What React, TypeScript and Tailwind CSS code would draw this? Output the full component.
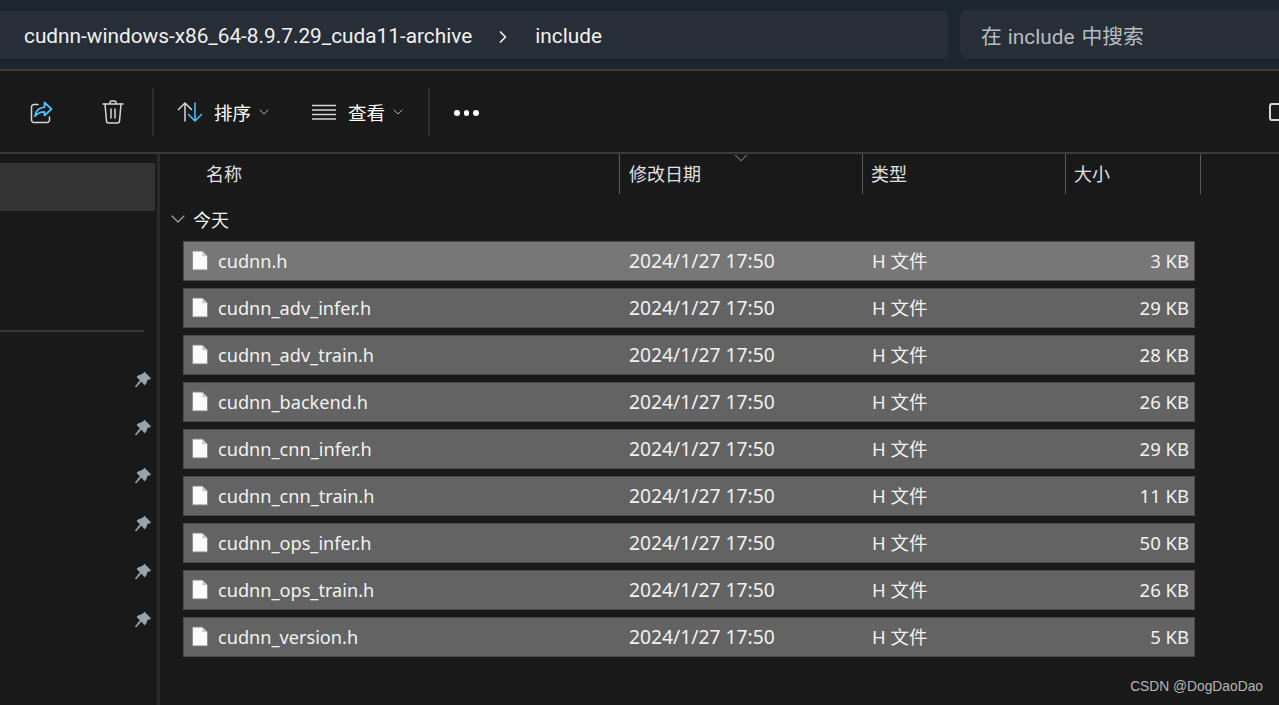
import { ChevronDown, ChevronRight } from 'lucide-react';

const files = [
  { name: 'cudnn.h', size: '3 KB' },
  { name: 'cudnn_adv_infer.h', size: '29 KB' },
  { name: 'cudnn_adv_train.h', size: '28 KB' },
  { name: 'cudnn_backend.h', size: '26 KB' },
  { name: 'cudnn_cnn_infer.h', size: '29 KB' },
  { name: 'cudnn_cnn_train.h', size: '11 KB' },
  { name: 'cudnn_ops_infer.h', size: '50 KB' },
  { name: 'cudnn_ops_train.h', size: '26 KB' },
  { name: 'cudnn_version.h', size: '5 KB' },
];

const font = "font-['Noto_Sans','Noto_Sans_CJK_SC',sans-serif]";

function ShareIcon() {
  return (
    <svg width="26" height="26" viewBox="0 0 26 26" fill="none">
      <path d="M10 5.5H6a2.5 2.5 0 0 0-2.5 2.5v13A2.5 2.5 0 0 0 6 23.5h13a2.5 2.5 0 0 0 2.5-2.5v-3" stroke="#d6d6d6" strokeWidth="1.5" strokeLinecap="round" />
      <path d="M16.5 3.5 23.5 10l-7 6.5v-3.6c-4 0-7 1.2-9.5 4.3.6-5.2 3.8-8.6 9.5-9.1V3.5Z" stroke="#4cc2ff" strokeWidth="1.8" strokeLinejoin="round" />
    </svg>
  );
}

function TrashIcon() {
  return (
    <svg width="24" height="26" viewBox="0 0 24 26" fill="none" stroke="#d6d6d6" strokeWidth="1.5" strokeLinecap="round" strokeLinejoin="round">
      <path d="M2 5h20M9 5V3.5A1.5 1.5 0 0 1 10.5 2h3A1.5 1.5 0 0 1 15 3.5V5" />
      <path d="M4 5l1.5 17a2 2 0 0 0 2 2h9a2 2 0 0 0 2-2L20 5" />
      <path d="M10 10v9M14 10v9" />
    </svg>
  );
}

function SortIcon() {
  return (
    <svg width="26" height="24" viewBox="0 0 26 24" fill="none" strokeWidth="1.5" strokeLinecap="round" strokeLinejoin="round">
      <path d="M8 21V3M1.5 9.5 8 3l6.5 6.5" stroke="#d6d6d6" />
      <path d="M18 3v18M11.5 14.5 18 21l6.5-6.5" stroke="#4cc2ff" />
    </svg>
  );
}

function ViewIcon() {
  return (
    <svg width="24" height="16" viewBox="0 0 24 16" fill="none" stroke="#d6d6d6" strokeWidth="1.4">
      <path d="M0 1.5h24M0 6h24M0 10.5h24M0 15h24" />
    </svg>
  );
}

function PinIcon() {
  return (
    <svg width="18" height="18" viewBox="0 0 18 18" fill="#97a3ab">
      <path d="M10.5.8 17 7.2l-1.6 1.6-1.6-.2-1.7 4.2-1.4 1.4-3.4-3.4L2 16.6l-1-1 4.8-6.3-3.3-3.3L4 4.6l4.2-1.5L8.9 2.4Z" />
    </svg>
  );
}

function FileIcon() {
  return (
    <svg width="16" height="21" viewBox="0 0 17 21">
      <path d="M.5.5h10.5l5.5 5.5v14.5H.5Z" fill="#fbfbfb" stroke="#8a8a8a" strokeWidth="1" />
      <path d="M11 .5v5.5h5.5Z" fill="#c8c8c8" />
    </svg>
  );
}

function ColumnHead({ label, className }: { label: string; className: string }) {
  return (
    <div className={`h-[40px] flex items-center border-r border-[#5a5a5a] text-[18px] text-[#e0e0e0] ${className}`}>
      {label}
    </div>
  );
}

export default function App() {
  return (
    <div className={`w-[1279px] h-[705px] overflow-hidden flex flex-col bg-[#191919] text-white ${font}`}>
      {/* address bar */}
      <div className="h-[71px] shrink-0 bg-[#1c2630] border-b-2 border-[#3a3a3a] flex gap-[12px] pt-[11px]">
        <div className="w-[948px] h-[48px] bg-[#272e37] rounded-r-md flex items-center pl-6 pt-[3px] text-[20.8px] text-[#f2f2f2] font-['Roboto','Noto_Sans_CJK_SC',sans-serif]">
          <span>cudnn-windows-x86_64-8.9.7.29_cuda11-archive</span>
          <ChevronRight className="ml-[21px] mr-[22px] w-[20px] h-[20px]" strokeWidth={2} />
          <span>include</span>
        </div>
        <div className="flex-1 h-[49px] -mt-px pt-[6px] bg-[#272e37] rounded-l-lg flex items-center pl-[21px] text-[20.8px] text-[#b8bcc0] font-['Roboto','Noto_Sans_CJK_SC',sans-serif]">
          <span>在</span>
          <span className="ml-[6px] mr-[7px]">include</span>
          <span>中搜索</span>
        </div>
      </div>

      {/* toolbar */}
      <div className="h-[83px] shrink-0 border-b-2 border-[#3a3a3a] flex items-center pt-[1px] relative">
        <div className="w-[154px] flex items-center pl-[28px] gap-[47px] h-[48px] border-r-2 border-[#2e2e2e]">
          <ShareIcon />
          <TrashIcon />
        </div>
        <div className="flex items-center h-[48px] w-[276px] border-r-2 border-[#2e2e2e] pl-[23px] text-[18.5px]">
          <SortIcon />
          <span className="ml-[11px] pt-[1px]">排序</span>
          <ChevronDown className="ml-[5px] w-[16px] h-[16px] text-[#b0b0b0]" strokeWidth={1.5} />
          <div className="w-[40px]" />
          <ViewIcon />
          <span className="ml-[12px] pt-[1px]">查看</span>
          <ChevronDown className="ml-[5px] w-[16px] h-[16px] text-[#b0b0b0]" strokeWidth={1.5} />
        </div>
        <div className="ml-[24px] mt-[2px] flex gap-[4px]">
          <div className="w-[5.5px] h-[5.5px] rounded-full bg-white" />
          <div className="w-[5.5px] h-[5.5px] rounded-full bg-white" />
          <div className="w-[5.5px] h-[5.5px] rounded-full bg-white" />
        </div>
        <div className="ml-auto w-[10px] h-[18px] rounded-l-[3px] border-2 border-r-0 border-[#d6d6d6]" />
      </div>

      <div className="flex-1 flex min-h-0">
        {/* nav pane */}
        <div className="w-[160px] shrink-0 pt-[9px] border-r-[3px] border-[#2a2a2a]">
          <div className="w-[155px] h-[48px] bg-[#333333] rounded-r-[2px]" />
          <div className="mt-[119px] w-[144px] h-[2px] bg-[#383838]" />
          <div className="mt-[39px] flex flex-col items-end gap-[30px] pr-[1px] w-[153px]">
            {[0, 1, 2, 3, 4, 5].map((i) => (
              <PinIcon key={i} />
            ))}
          </div>
        </div>

        {/* file list */}
        <div className="flex-1 relative text-[#f2f2f2]">
          <div className="grid grid-cols-[460px_243px_203px_135px] relative">
            <ColumnHead label="名称" className="pl-[46px]" />
            <ColumnHead label="修改日期" className="pl-[9px]" />
            <ColumnHead label="类型" className="pl-[8px]" />
            <ColumnHead label="大小" className="pl-[8px]" />
            <ChevronDown className="absolute left-[570px] -top-[7px] w-[22px] h-[22px] text-[#a0a0a0]" strokeWidth={1} />
          </div>
          <div className="flex items-center h-[47px] pt-[5px] pl-[6px] text-[18px]">
            <ChevronDown className="w-[24px] h-[24px] mb-[3px] text-[#a0a0a0]" strokeWidth={1.2} />
            <span className="ml-[3px]">今天</span>
          </div>
          <div className="flex flex-col gap-[7px] ml-[23px] w-[1012px]">
            {files.map((f, i) => (
              <div
                key={f.name}
                className={`h-[40px] grid grid-cols-[445px_243px_1fr_auto] items-center border border-[#4a4a4a] text-[18.5px] pr-[5px] ${i === 0 ? 'bg-[#777777]' : 'bg-[#636363]'}`}
              >
                <div className="flex items-center pl-[8px] gap-[10px]">
                  <FileIcon />
                  <span className="text-[18.15px] pt-[2px]">{f.name}</span>
                </div>
                <span className="text-[19.3px]">2024/1/27 17:50</span>
                <span>H 文件</span>
                <span>{f.size}</span>
              </div>
            ))}
          </div>
          <div className="absolute right-[16px] bottom-[7px] text-[13.8px] font-['Liberation_Sans',sans-serif] text-[#b5b5b5]">
            CSDN @DogDaoDao
          </div>
        </div>
      </div>
    </div>
  );
}
